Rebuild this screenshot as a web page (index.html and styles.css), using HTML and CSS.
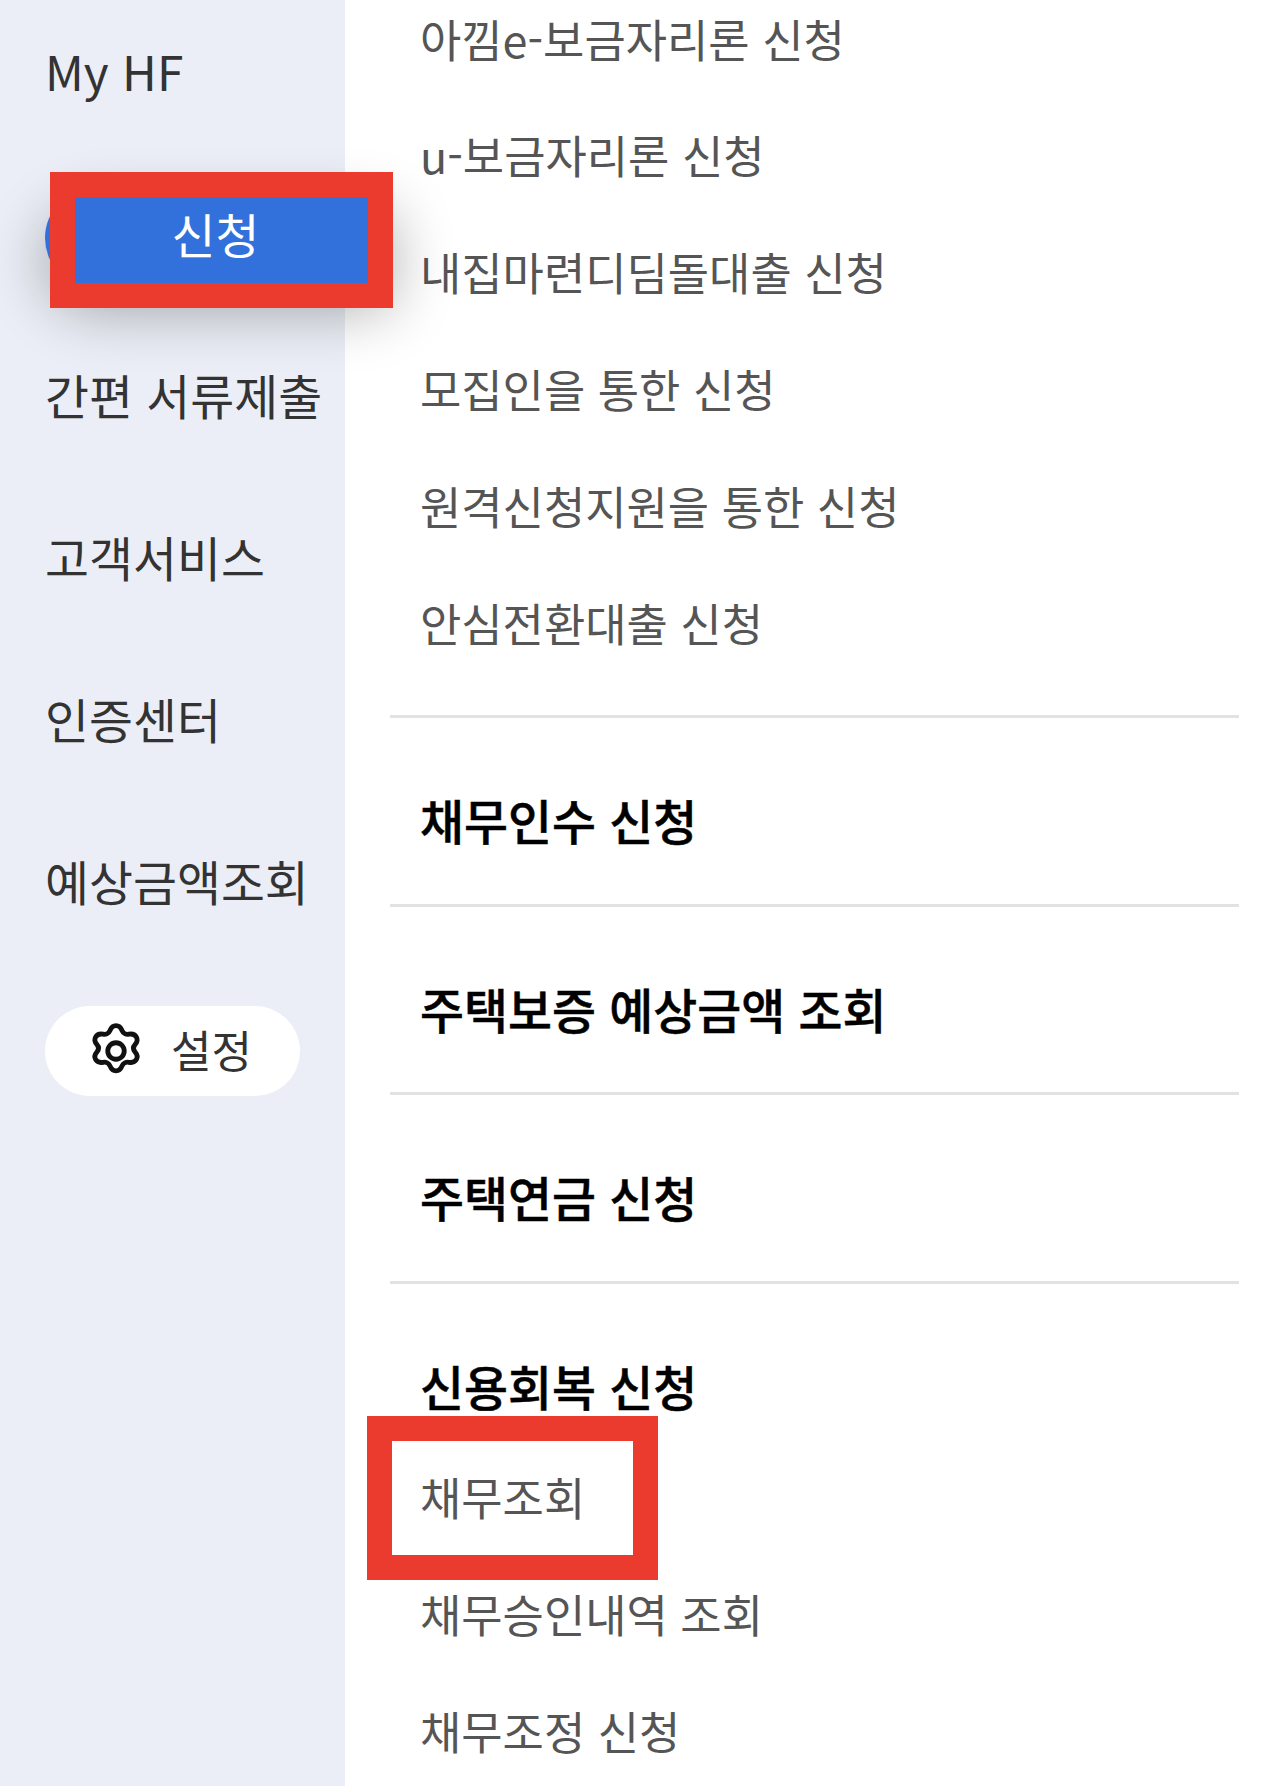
FILE: index.html
```html
<!DOCTYPE html>
<html lang="ko">
<head>
<meta charset="utf-8">
<title>신청 메뉴</title>
<link rel="stylesheet" href="styles.css">
</head>
<body>
<div class="page">
  <nav class="side">
    <div class="side-item side-first">My HF</div>
    <div class="side-active">신청</div>
    <div class="side-item">간편 서류제출</div>
    <div class="side-item">고객서비스</div>
    <div class="side-item">인증센터</div>
    <div class="side-item">예상금액조회</div>
    <div class="settings">
      <svg class="gear" viewBox="0 0 24 24" fill="none" stroke="#111" stroke-width="1.750" stroke-linejoin="round">
        <path d="M12 2.800c1.200 0 1.800.8 2.200 1.800.4 1 1.500 1.500 2.500 1.300 1.100-.2 2.100 0 2.700 1 .6 1 .2 2-.5 2.800-.7.8-.7 1.800 0 2.600.7.800 1.100 1.800.5 2.800-.6 1-1.600 1.200-2.700 1-1-.2-2.100.3-2.500 1.300-.4 1-1 1.800-2.200 1.800s-1.800-.8-2.200-1.800c-.4-1-1.500-1.500-2.500-1.300-1.100.2-2.100 0-2.700-1-.6-1-.2-2 .5-2.800.7-.8.7-1.800 0-2.600-.7-.8-1.100-1.800-.5-2.800.6-1 1.600-1.200 2.700-1 1 .2 2.100-.3 2.500-1.300.4-1 1-1.800 2.200-1.800z"/>
        <circle cx="12" cy="12" r="3"/>
      </svg>
      <span class="settings-label">설정</span>
    </div>
  </nav>
  <main class="content">
    <ul class="sub sub-top">
      <li>아낌e-보금자리론 신청</li>
      <li>u-보금자리론 신청</li>
      <li>내집마련디딤돌대출 신청</li>
      <li>모집인을 통한 신청</li>
      <li>원격신청지원을 통한 신청</li>
      <li>안심전환대출 신청</li>
    </ul>
    <div class="group">채무인수 신청</div>
    <div class="group">주택보증 예상금액 조회</div>
    <div class="group">주택연금 신청</div>
    <div class="group group-open">신용회복 신청</div>
    <ul class="sub">
      <li>채무조회</li>
      <li>채무승인내역 조회</li>
      <li>채무조정 신청</li>
    </ul>
  </main>
</div>
<div class="mark mark-apply"></div>
<div class="mark mark-debt"></div>
</body>
</html>
```
FILE: styles.css
```css
* { box-sizing: border-box; }
html, body { margin: 0; padding: 0; }
body {
  width: 1284px;
  height: 1786px;
  overflow: hidden;
  position: relative;
  background: #fff;
  font-family: "Noto Sans CJK KR", "Noto Sans", sans-serif;
}
.page { display: flex; height: 1786px; }
.side {
  width: 345px;
  flex: none;
  background: #ebeef6;
  padding: 0 0 0 45px;
  display: flex;
  flex-direction: column;
  align-items: flex-start;
}
.side-item {
  height: 162px;
  line-height: 162px;
  font-size: 47.800px;
  color: #333;
  white-space: nowrap;
}
.side-first { height: 188px; line-height: 141px; }
.side-active {
  width: 347px;
  height: 100px;
  margin-bottom: 26px;
  border-radius: 50px 16px 16px 50px;
  background: #3271dc;
  color: #fff;
  font-size: 47.800px;
  line-height: 92px;
  text-align: center;
  padding-right: 6px;
  box-shadow: 0 22px 60px rgba(0, 0, 0, 0.32);
  position: relative;
  z-index: 1;
  white-space: nowrap;
}
.settings {
  margin-top: 44px;
  width: 255px;
  height: 90px;
  border-radius: 45px;
  background: #fff;
  display: flex;
  align-items: center;
  padding-left: 38px;
  gap: 22px;
  font-size: 44px;
  color: #333;
}
.settings-label { margin-bottom: 5px; }
.gear { width: 66px; height: 66px; flex: none; }
.content { flex: 1; padding: 0 45px 0 45px; }
.sub { list-style: none; margin: 0; padding: 0 0 0 30px; }
.sub li {
  height: 116.900px;
  line-height: 116.900px;
  font-size: 44.900px;
  color: #555;
  white-space: nowrap;
}
.sub-top { margin-top: -19.500px; padding-bottom: 33.100px; border-bottom: 3px solid #e2e2e2; }
.group {
  height: 188.600px;
  line-height: 203px;
  padding-left: 30px;
  font-size: 47.800px;
  font-weight: 500;
  -webkit-text-stroke: 0.5px #000;
  color: #000;
  border-bottom: 3px solid #e2e2e2;
  white-space: nowrap;
}
.group-open { height: 155px; border-bottom: 0; }
.mark { position: absolute; border: 25px solid #eb3a2e; z-index: 2; }
.mark-apply { left: 50px; top: 172px; width: 343px; height: 136px; }
.mark-debt { left: 367px; top: 1416px; width: 291px; height: 164px; }
```
